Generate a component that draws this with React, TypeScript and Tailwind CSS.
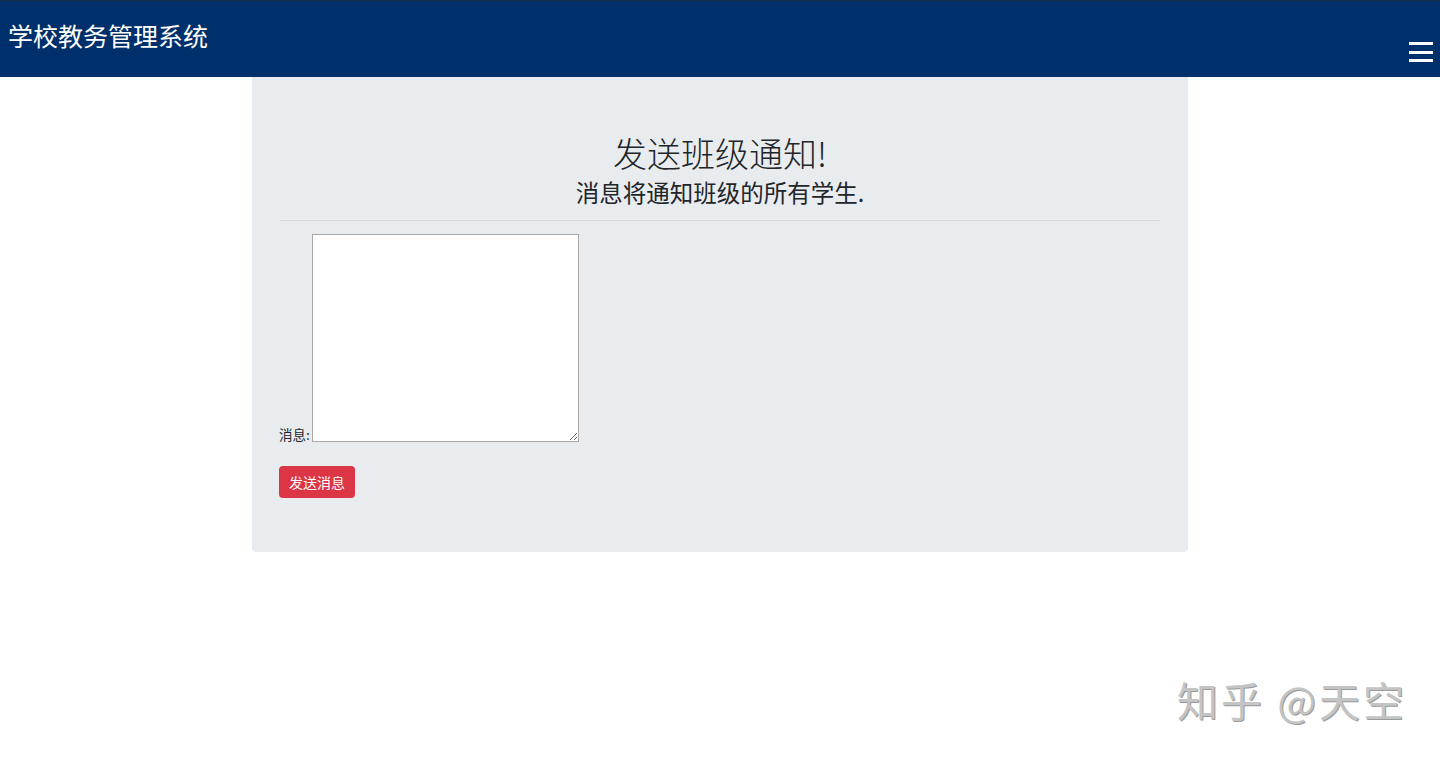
const font = "font-['Noto_Sans_CJK_SC','Noto_Sans',sans-serif]";

function Navbar() {
  return (
    <nav className="flex h-[77px] items-start justify-between border-t border-[#1d2a44] bg-[#00306b] pr-[9px] pl-[8px]">
      <a className="mt-[17px] text-[25px] leading-[34px] text-white">学校教务管理系统</a>
      <button type="button" aria-label="menu" className="mt-[41px] mr-[-2px] flex h-[20px] w-[24px] flex-col justify-between">
        <span className="block h-[3px] w-full bg-white" />
        <span className="block h-[3px] w-full bg-white" />
        <span className="block h-[3px] w-full bg-white" />
      </button>
    </nav>
  );
}

function NoticeForm() {
  return (
    <div className="mx-auto w-[936px] rounded-b bg-[#e9ecef] px-[28px] pt-[53px] pb-[54px]">
      <h1 className="text-center text-[34px] leading-[46px] font-light text-[#212529]">发送班级通知!</h1>
      <p className="text-center text-[23.5px] leading-[32px] text-[#212529]">消息将通知班级的所有学生.</p>
      <hr className="mt-[12px] mb-[13px] border-t border-[#d8dadd]" />
      <form className="flex flex-col items-start">
        <div className="flex items-end">
          <label className="mr-[2px] ml-[-1px] text-[13.5px] leading-[16px] text-[#212529]">消息:</label>
          <textarea className="h-[208px] w-[267px] border border-[#a8a8a8] bg-white" />
        </div>
        <button type="button" className="mt-[24px] ml-[-1px] h-[32px] rounded bg-[#dc3545] px-[10px] text-[14px] text-white">
          发送消息
        </button>
      </form>
    </div>
  );
}

export default function App() {
  return (
    <div className={`relative h-[759px] overflow-hidden bg-white ${font}`}>
      <Navbar />
      <NoticeForm />
      <div className="absolute top-[673px] left-[1177px] text-[41px] leading-[52px] tracking-[3px] text-[#c4c4c4] [text-shadow:1px_1px_0_#9a9a9a]">
        知乎 @天空
      </div>
    </div>
  );
}
